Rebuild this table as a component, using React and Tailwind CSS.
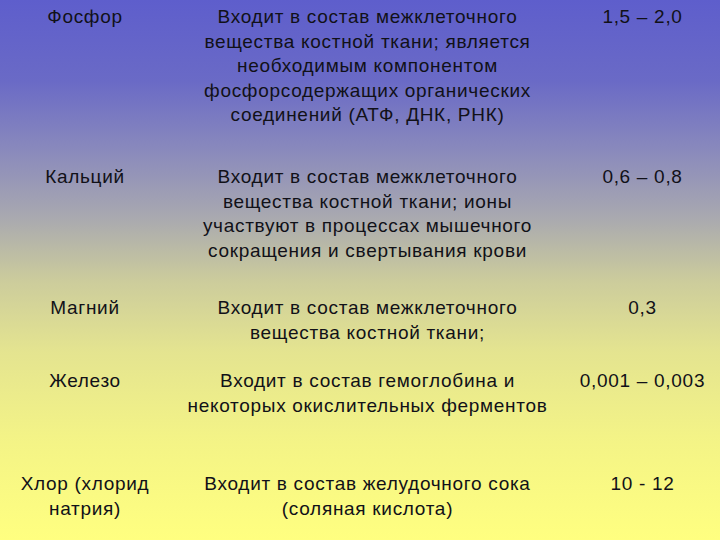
const ROWS = [
  {
    name: ['Фосфор'],
    role: [
      'Входит в состав межклеточного',
      'вещества костной ткани; является',
      'необходимым компонентом',
      'фосфорсодержащих органических',
      'соединений (АТФ, ДНК, РНК)',
    ],
    amount: '1,5 – 2,0',
    h: 'h-[160px]',
  },
  {
    name: ['Кальций'],
    role: [
      'Входит в состав межклеточного',
      'вещества костной ткани; ионы',
      'участвуют в процессах мышечного',
      'сокращения и свертывания крови',
    ],
    amount: '0,6 – 0,8',
    h: 'h-[131px]',
  },
  {
    name: ['Магний'],
    role: ['Входит в состав межклеточного', 'вещества костной ткани;'],
    amount: '0,3',
    h: 'h-[73px]',
  },
  {
    name: ['Железо'],
    role: ['Входит в состав гемоглобина и', 'некоторых окислительных ферментов'],
    amount: '0,001 – 0,003',
    h: 'h-[103px]',
  },
  {
    name: ['Хлор (хлорид', 'натрия)'],
    role: ['Входит в состав желудочного сока', '(соляная кислота)'],
    amount: '10 - 12',
    h: 'h-[73px]',
  },
]

export default function App() {
  return (
    <div className="w-[720px] h-[540px] overflow-hidden bg-[linear-gradient(to_bottom,#5e5ecc_0%,#6a6ac6_15%,#8a8abc_28%,#a8a8b0_40%,#cccc9c_52%,#e4e490_65%,#f4f486_82%,#ffff80_100%)] text-[#111118] font-['Liberation_Sans',Arial,sans-serif] text-[19px] tracking-[0.7px] leading-[24.5px]">
      {ROWS.map((row, i) => (
        <div key={i} className={`grid grid-cols-[170px_395px_155px] pt-[5px] ${row.h}`}>
          <div className="text-center">
            {row.name.map((l) => <div key={l}>{l}</div>)}
          </div>
          <div className="text-center">
            {row.role.map((l) => <div key={l}>{l}</div>)}
          </div>
          <div className="text-center">{row.amount}</div>
        </div>
      ))}
    </div>
  )
}
